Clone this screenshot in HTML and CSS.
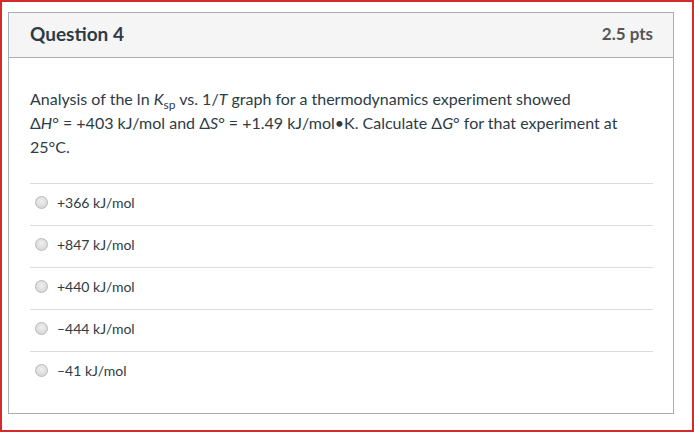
FILE: index.html
```html
<!DOCTYPE html>
<html>
<head>
<meta charset="utf-8">
<link rel="stylesheet" href="styles.css">
</head>
<body>
<div class="frame">
  <div class="card">
    <div class="header">
      <div class="title">Question 4</div>
      <div class="pts">2.5 pts</div>
    </div>
    <div class="body">
      <p class="question">Analysis of the ln <i>K</i><sub>sp</sub> vs. 1/<i>T</i> graph for a thermodynamics experiment showed<br>Δ<i>H</i>° = +403 kJ/mol and Δ<i>S</i>° = +1.49 kJ/mol•K. Calculate Δ<i>G</i>° for that experiment at 25°C.</p>
      <div class="answers">
        <div class="answer"><span class="radio"></span><span class="label">+366 kJ/mol</span></div>
        <div class="answer"><span class="radio"></span><span class="label">+847 kJ/mol</span></div>
        <div class="answer"><span class="radio"></span><span class="label">+440 kJ/mol</span></div>
        <div class="answer"><span class="radio"></span><span class="label">–444 kJ/mol</span></div>
        <div class="answer"><span class="radio"></span><span class="label">–41 kJ/mol</span></div>
      </div>
    </div>
  </div>
</div>
</body>
</html>
```
FILE: styles.css
```css
html, body {
  margin: 0;
  padding: 0;
  background: #fff;
}
.frame {
  box-sizing: border-box;
  width: 694px;
  height: 432px;
  border: 2px solid #d42a2a;
  padding: 10px 0 0 6px;
  font-family: Lato, "Open Sans", sans-serif;
  color: #2d3b45;
}
.card {
  box-sizing: border-box;
  width: 666px;
  height: 402px;
  border: 1px solid #a9aeb1;
}
.header {
  box-sizing: border-box;
  height: 45px;
  background: #f5f5f5;
  border-bottom: 1px solid #a9aeb1;
  display: flex;
  align-items: center;
  justify-content: space-between;
  padding: 0 20px 4px 21px;
}
.title {
  font-weight: bold;
  font-size: 19px;
  color: #2d3b45;
}
.pts {
  font-weight: bold;
  font-size: 17px;
  color: #555;
}
.body {
  padding: 0 20px 0 21px;
}
.question {
  margin: 29px 0 0;
  font-size: 16px;
  line-height: 24px;
}
.question sub {
  font-size: 12px;
  line-height: 0;
  vertical-align: -4px;
}
.answers {
  margin-top: 24px;
}
.answer {
  border-top: 1px solid #dcdcdc;
  height: 36px;
  padding-bottom: 5px;
  display: flex;
  align-items: center;
  font-size: 14px;
}
.radio {
  box-sizing: border-box;
  width: 13px;
  height: 13px;
  border-radius: 50%;
  border: 1px solid #b9b9b9;
  background: radial-gradient(circle at 50% 40%, #f0f0f0, #d0d0d0);
  margin: 0 9px 0 5px;
}
```
